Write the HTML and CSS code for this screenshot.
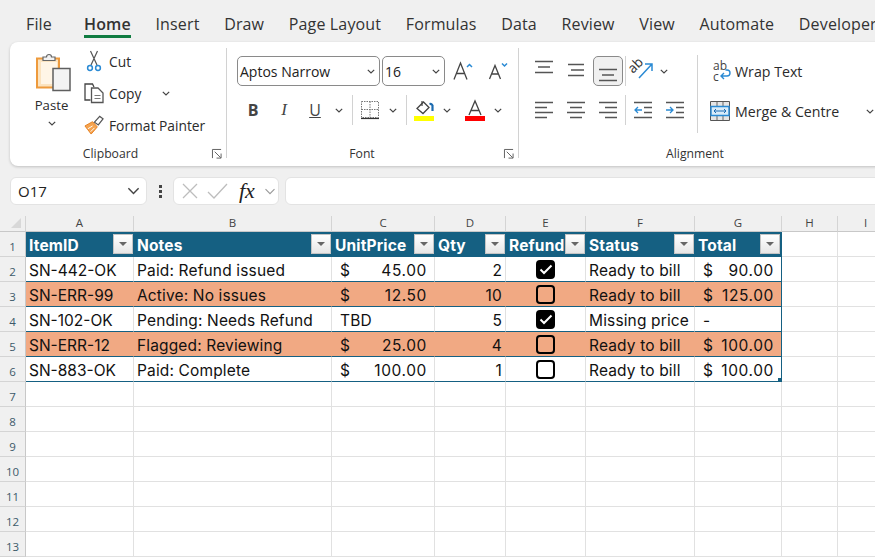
FILE: index.html
```html
<!DOCTYPE html>
<html lang="en">
<head>
<meta charset="utf-8">
<title>Excel</title>
<link rel="stylesheet" href="styles.css">
</head>
<body>
<nav class="tabs">
  <span class="tab">File</span>
  <span class="tab active">Home</span>
  <span class="tab">Insert</span>
  <span class="tab">Draw</span>
  <span class="tab">Page Layout</span>
  <span class="tab">Formulas</span>
  <span class="tab">Data</span>
  <span class="tab">Review</span>
  <span class="tab">View</span>
  <span class="tab">Automate</span>
  <span class="tab">Developer</span>
</nav>

<section class="ribbon">
  <div class="group clipboard">
    <div class="group-body clip-body">
      <div class="paste">
        <svg class="paste-icon" width="36" height="40" viewBox="0 0 36 40">
          <path d="M2 6.500h22v29H2z" fill="#fbe3bf" stroke="#ee9a3c" stroke-width="2"/>
          <path d="M6 10h16v22H6z" fill="#fff5e6"/>
          <path d="M8 8V5h3.500a2.500 2.500 0 0 1 5 0H20v3.500H8z" fill="#f2f2f2" stroke="#666" stroke-width="1.200"/>
          <path d="M18 16.500h17v22H18z" fill="#f3f3f3" stroke="#5f5f5f" stroke-width="1.500"/>
        </svg>
        <span class="paste-label">Paste</span>
        <svg class="chev paste-chev" viewBox="0 0 8 5"><path d="M.8.8 4 4 7.200.8"/></svg>
      </div>
      <div class="clip-list">
        <div class="clip-row">
          <svg width="20" height="22" viewBox="0 0 20 22"><path d="M6.500 1l6.500 14M13.500 1 7 15" fill="none" stroke="#555" stroke-width="1.200"/><circle cx="6" cy="18" r="2.400" fill="none" stroke="#2a8ad4" stroke-width="1.500"/><circle cx="14" cy="18" r="2.400" fill="none" stroke="#2a8ad4" stroke-width="1.500"/></svg>
          <span>Cut</span>
        </div>
        <div class="clip-row">
          <svg width="20" height="20" viewBox="0 0 20 20"><path d="M6.500 17H1V1h7.500l1.500 3" fill="none" stroke="#444" stroke-width="1.300"/><path d="M7.500 5h6.500l5 5v9.500H7.500z" fill="#fff" stroke="#555" stroke-width="1.300"/><path d="M10.500 12.500h6M10.500 15.500h6" stroke="#777"/></svg>
          <span>Copy</span>
          <svg class="chev copy-chev" viewBox="0 0 8 5"><path d="M.8.8 4 4 7.200.8"/></svg>
        </div>
        <div class="clip-row">
          <svg width="21" height="20" viewBox="0 0 21 20"><path d="M1 11 9 6.500l5 5.500-6.500 7.500z" fill="#f5a34f" stroke="#e57e1f"/><path d="M4 14l5-3M7 17l4-4" stroke="#fff"/><path d="M11 7l5.500-6 3.500 2.500-5 6.500z" fill="#fff" stroke="#555" stroke-width="1.300"/></svg>
          <span>Format Painter</span>
        </div>
      </div>
    </div>
    <div class="group-label">Clipboard</div>
    <svg class="launcher" viewBox="0 0 11 11"><path d="M.5 10V.5H10M3 3l6.500 6.500M5 10h5V5"/></svg>
  </div>

  <div class="group font">
    <div class="font-top">
      <div class="select font-name"><span>Aptos Narrow</span><svg class="chev" viewBox="0 0 8 5"><path d="M.8.8 4 4 7.200.8"/></svg></div>
      <div class="select font-size"><span>16</span><svg class="chev" viewBox="0 0 8 5"><path d="M.8.8 4 4 7.200.8"/></svg></div>
      <svg class="grow" width="20" height="20" viewBox="0 0 20 20"><path d="M1 18.500 7.500 2 14 18.500M3.500 12.500h8" fill="none" stroke="#444" stroke-width="1.300"/><path d="M14 6l2.500-2.500L19 6" fill="none" stroke="#2a8ad4" stroke-width="1.500"/></svg>
      <svg class="shrink" width="20" height="20" viewBox="0 0 20 20"><path d="M1.500 18 7 4.500 12.500 18M3.500 13h7" fill="none" stroke="#444" stroke-width="1.300"/><path d="M14 2.500l2.500 2.500L19 2.500" fill="none" stroke="#2a8ad4" stroke-width="1.500"/></svg>
    </div>
    <div class="font-bottom">
      <span class="fmt bold">B</span>
      <span class="fmt italic">I</span>
      <span class="fmt under">U</span>
      <svg class="chev after-u" viewBox="0 0 8 5"><path d="M.8.8 4 4 7.200.8"/></svg>
      <i class="vsep"></i>
      <svg width="20" height="20" viewBox="0 0 20 20"><path d="M1.500 1.500h17v16h-17zM10 1.500v16M1.500 9.500h17" fill="none" stroke="#777" stroke-dasharray="1.500 1"/><path d="M1 18.500h18" stroke="#333" stroke-width="1.200"/></svg>
      <svg class="chev" viewBox="0 0 8 5"><path d="M.8.8 4 4 7.200.8"/></svg>
      <i class="vsep"></i>
      <div class="colour-btn fill-btn">
        <svg width="20" height="16" viewBox="0 0 20 16"><path d="M3 8.500 9.500 2l5.500 5.500-6 6z" fill="#fff" stroke="#444" stroke-width="1.300"/><path d="M8 1v5" stroke="#444" stroke-width="1.200"/><path d="M15.500 4a2.500 2 0 0 1 3 2.500V11" fill="none" stroke="#1c6bb0" stroke-width="2.200"/></svg>
        <b class="swatch yellow"></b>
      </div>
      <svg class="chev" viewBox="0 0 8 5"><path d="M.8.8 4 4 7.200.8"/></svg>
      <div class="colour-btn text-btn">
        <svg width="20" height="16" viewBox="0 0 20 16"><path d="M4 15 10 1l6 14M6 10.500h8" fill="none" stroke="#444" stroke-width="1.300"/></svg>
        <b class="swatch red"></b>
      </div>
      <svg class="chev" viewBox="0 0 8 5"><path d="M.8.8 4 4 7.200.8"/></svg>
    </div>
    <div class="group-label">Font</div>
    <svg class="launcher" viewBox="0 0 11 11"><path d="M.5 10V.5H10M3 3l6.500 6.500M5 10h5V5"/></svg>
  </div>

  <div class="group alignment">
    <div class="align-main">
      <div class="align-grid">
        <div class="align-row">
          <span class="al al-top"><svg width="20" height="14" viewBox="0 0 20 14"><path d="M1 1.500h18M4 7h12M1 12.500h18"/></svg></span>
          <span class="al al-mid"><svg width="20" height="14" viewBox="0 0 20 14"><path d="M2 1.500h16M5 7h13M2 12.500h16"/></svg></span>
          <span class="al al-bot pressed"><svg width="20" height="14" viewBox="0 0 20 14"><path d="M1 1.500h18M4 7h12M1 12.500h18"/></svg></span>
          <i class="vsep"></i>
          <span class="orient"><svg width="22" height="24" viewBox="0 0 22 24"><path d="M6 19 19 5M12 5h7v7" fill="none" stroke="#2a8ad4" stroke-width="1.500"/><text x="0" y="15" class="orient-text" transform="rotate(-45 0 15)">ab</text></svg></span>
          <svg class="chev" viewBox="0 0 8 5"><path d="M.8.8 4 4 7.200.8"/></svg>
        </div>
        <div class="align-row">
          <span class="al"><svg width="20" height="18" viewBox="0 0 20 18"><path d="M1 1.500h18M1 6.500h12M1 11.500h18M1 16.500h12"/></svg></span>
          <span class="al"><svg width="20" height="18" viewBox="0 0 20 18"><path d="M1 1.500h18M4 6.500h12M1 11.500h18M4 16.500h12"/></svg></span>
          <span class="al"><svg width="20" height="18" viewBox="0 0 20 18"><path d="M1 1.500h18M7 6.500h12M1 11.500h18M7 16.500h12"/></svg></span>
          <i class="vsep"></i>
          <span class="al indent"><svg width="20" height="18" viewBox="0 0 20 18"><path d="M1 1.500h18M11 6.500h8M11 11.500h8M1 16.500h18"/><path class="blue" d="M9 9H2M5 6 2 9l3 3"/></svg></span>
          <span class="al indent"><svg width="20" height="18" viewBox="0 0 20 18"><path d="M1 1.500h18M11 6.500h8M11 11.500h8M1 16.500h18"/><path class="blue" d="M1 9h7M5 6l3 3-3 3"/></svg></span>
        </div>
      </div>
      <i class="vsep tall"></i>
      <div class="wrap-col">
        <div class="wrap-row wrap">
          <svg width="18" height="20" viewBox="0 0 18 20"><text x="0" y="9" class="abc">ab</text><text x="0" y="19.500" class="abc">c</text><path d="M8 15h6a3 3 0 0 0 0-6h-1.500M11 12l-3 3 3 3" fill="none" stroke="#2a8ad4" stroke-width="1.400"/></svg>
          <span>Wrap Text</span>
        </div>
        <div class="wrap-row merge">
          <svg width="20" height="20" viewBox="0 0 20 20"><path d="M.5.500h19v19H.5z" fill="#fff" stroke="#555"/><path d="M1 1h18v5H1zM1 14h18v5H1z" fill="#e6e6e6"/><path d="M7 1v5M13 1v5M7 14v5M13 14v5" stroke="#666"/><path d="M1 5.500h18v9H1z" fill="#d9ecfa" stroke="#2a8ad4" stroke-width="1.400"/><path d="M4 10h12M6 8l-2 2 2 2M14 8l2 2-2 2" fill="none" stroke="#1c6bb0"/></svg>
          <span>Merge &amp; Centre</span>
          <svg class="chev merge-chev" viewBox="0 0 8 5"><path d="M.8.8 4 4 7.200.8"/></svg>
        </div>
      </div>
    </div>
    <div class="group-label">Alignment</div>
  </div>
</section>

<section class="formula-bar">
  <div class="name-box"><span>O17</span><svg class="chev big" viewBox="0 0 8 5"><path d="M.8.8 4 4 7.200.8"/></svg></div>
  <div class="dots"><i></i><i></i><i></i></div>
  <div class="fx-box">
    <svg width="18" height="18" viewBox="0 0 18 18"><path d="M2 2l14 14M16 2 2 16" stroke="#bdbdbd" stroke-width="1.300"/></svg>
    <svg width="21" height="18" viewBox="0 0 21 18"><path d="M1 10l6 6L20 2" fill="none" stroke="#bdbdbd" stroke-width="1.300"/></svg>
    <span class="fx">fx</span>
    <svg class="chev fx-chev" viewBox="0 0 8 5"><path d="M.8.8 4 4 7.200.8"/></svg>
  </div>
  <div class="formula-input"></div>
</section>

<section class="sheet">
  <div class="col-head corner"><b class="tri"></b></div>
  <div class="col-head">A</div><div class="col-head">B</div><div class="col-head">C</div><div class="col-head">D</div><div class="col-head">E</div><div class="col-head">F</div><div class="col-head">G</div><div class="col-head">H</div><div class="col-head">I</div>

  <div class="row-head">1</div>
  <div class="th">ItemID<b class="filter"></b></div>
  <div class="th">Notes<b class="filter"></b></div>
  <div class="th">UnitPrice<b class="filter"></b></div>
  <div class="th">Qty<b class="filter"></b></div>
  <div class="th">Refund<b class="filter"></b></div>
  <div class="th">Status<b class="filter"></b></div>
  <div class="th last">Total<b class="filter"></b></div>
  <div class="c"></div><div class="c"></div>

  <div class="row-head">2</div>
  <div class="td id">SN-442-OK</div><div class="td">Paid: Refund issued</div>
  <div class="td acc"><span>$</span><span>45.00</span></div><div class="td num">2</div>
  <div class="td chk"><b class="box on"><svg viewBox="0 0 14 11"><path d="M1.500 5.500 5 9l7.500-7.500"/></svg></b></div>
  <div class="td">Ready to bill</div><div class="td acc tot last"><span>$</span><span>90.00</span></div>
  <div class="c"></div><div class="c"></div>

  <div class="row-head">3</div>
  <div class="td hl id">SN-ERR-99</div><div class="td hl">Active: No issues</div>
  <div class="td hl acc"><span>$</span><span>12.50</span></div><div class="td hl num">10</div>
  <div class="td hl chk"><b class="box"></b></div>
  <div class="td hl">Ready to bill</div><div class="td hl acc tot last"><span>$</span><span>125.00</span></div>
  <div class="c"></div><div class="c"></div>

  <div class="row-head">4</div>
  <div class="td id">SN-102-OK</div><div class="td">Pending: Needs Refund</div>
  <div class="td tbd">TBD</div><div class="td num">5</div>
  <div class="td chk"><b class="box on"><svg viewBox="0 0 14 11"><path d="M1.500 5.500 5 9l7.500-7.500"/></svg></b></div>
  <div class="td">Missing price</div><div class="td tot last">-</div>
  <div class="c"></div><div class="c"></div>

  <div class="row-head">5</div>
  <div class="td hl id">SN-ERR-12</div><div class="td hl">Flagged: Reviewing</div>
  <div class="td hl acc"><span>$</span><span>25.00</span></div><div class="td hl num">4</div>
  <div class="td hl chk"><b class="box"></b></div>
  <div class="td hl">Ready to bill</div><div class="td hl acc tot last"><span>$</span><span>100.00</span></div>
  <div class="c"></div><div class="c"></div>

  <div class="row-head">6</div>
  <div class="td id">SN-883-OK</div><div class="td">Paid: Complete</div>
  <div class="td acc"><span>$</span><span>100.00</span></div><div class="td num">1</div>
  <div class="td chk"><b class="box"></b></div>
  <div class="td">Ready to bill</div><div class="td acc tot last"><span>$</span><span>100.00</span><b class="resize"></b></div>
  <div class="c"></div><div class="c"></div>

  <div class="row-head">7</div><div class="c"></div><div class="c"></div><div class="c"></div><div class="c"></div><div class="c"></div><div class="c"></div><div class="c"></div><div class="c"></div><div class="c"></div>
  <div class="row-head">8</div><div class="c"></div><div class="c"></div><div class="c"></div><div class="c"></div><div class="c"></div><div class="c"></div><div class="c"></div><div class="c"></div><div class="c"></div>
  <div class="row-head">9</div><div class="c"></div><div class="c"></div><div class="c"></div><div class="c"></div><div class="c"></div><div class="c"></div><div class="c"></div><div class="c"></div><div class="c"></div>
  <div class="row-head">10</div><div class="c"></div><div class="c"></div><div class="c"></div><div class="c"></div><div class="c"></div><div class="c"></div><div class="c"></div><div class="c"></div><div class="c"></div>
  <div class="row-head">11</div><div class="c"></div><div class="c"></div><div class="c"></div><div class="c"></div><div class="c"></div><div class="c"></div><div class="c"></div><div class="c"></div><div class="c"></div>
  <div class="row-head">12</div><div class="c"></div><div class="c"></div><div class="c"></div><div class="c"></div><div class="c"></div><div class="c"></div><div class="c"></div><div class="c"></div><div class="c"></div>
  <div class="row-head">13</div><div class="c"></div><div class="c"></div><div class="c"></div><div class="c"></div><div class="c"></div><div class="c"></div><div class="c"></div><div class="c"></div><div class="c"></div>
</section>
</body>
</html>
```
FILE: styles.css
```css
* { box-sizing: border-box; }
html, body { margin: 0; height: 560px; width: 875px; overflow: hidden; }
body { background: #f0f0f0; font-family: "Open Sans", "Noto Sans", sans-serif; color: #2b2b2b; }
svg { overflow: visible; }

/* tabs */
.tabs { display: flex; gap: 24.6px; height: 42px; padding: 13px 0 0 26px; font-size: 16px; letter-spacing: .15px; white-space: nowrap; color: #333; }
.tab { height: 25px; line-height: 22px; flex: none; }
.tab.active { font-weight: 600; border-bottom: 3px solid #107c41; margin-left: 7.500px; }

/* ribbon */
.ribbon { display: flex; margin-left: 10px; width: 900px; height: 124px; background: #fff; border-radius: 8px 0 0 8px; box-shadow: 0 1px 3px rgba(0,0,0,.2); font-size: 13.800px; }
.group { position: relative; display: flex; flex-direction: column; height: 124px; }
.group::after { content: ""; position: absolute; right: 0; top: 6px; height: 110px; width: 1px; background: #d2d2d2; }
.alignment::after { display: none; }
.group-label { position: absolute; left: 0; right: 0; top: 103px; text-align: center; font-size: 12.200px; line-height: 17px; color: #333; }
.clipboard .group-label { right: 16px; }
.font .group-label { right: 22px; }
.launcher { position: absolute; right: 5px; top: 107px; width: 10px; height: 10px; fill: none; stroke: #555; }
.chev { width: 8px; height: 5px; flex: none; fill: none; stroke: #444; stroke-width: 1.200; }
.vsep { width: 1px; height: 30px; background: #d2d2d2; flex: none; }

.clipboard { width: 217px; }
.clip-body { display: flex; padding: 9px 0 0 20px; }
.paste { width: 43px; display: flex; flex-direction: column; align-items: center; }
.paste-icon { margin-top: 1px; margin-left: 2px; flex: none; }
.paste-label { font-size: 13.200px; line-height: 20px; margin-top: 3px; }
.paste-chev { margin-top: 6px; }
.clip-list { margin: -6px 0 0 11px; display: flex; flex-direction: column; }
.clip-row { display: flex; align-items: center; height: 32px; gap: 5px; }
.clip-row svg:first-child { width: 20px; flex: none; }
.copy-chev { margin-left: 16px; }

.font { width: 292px; }
.font-top { display: flex; align-items: center; padding: 14px 0 0 10px; gap: 2px; }
.select { height: 30px; border: 1px solid #8a8a8a; border-radius: 5px; display: flex; align-items: center; justify-content: space-between; padding: 0 4px 0 2px; font-size: 14px; color: #222; }
.font-name { width: 143px; }
.font-size { width: 63px; }
.grow { margin-left: 6px; }
.shrink { margin-left: 13px; }
.font-bottom { display: flex; align-items: center; height: 30px; margin-top: 9px; padding-left: 20px; }
.fmt { width: 12px; text-align: center; font-size: 16px; color: #444; flex: none; }
.bold { font-weight: 700; }
.italic { font-style: italic; margin-left: 19px; font-family: "Liberation Serif", serif; font-size: 17px; }
.under { text-decoration: underline; margin-left: 19px; }
.font-bottom > .chev { margin: 0 0 0 9px; }
.font-bottom > .after-u { margin-left: 14px; }
.font-bottom > .vsep { margin: 0 7px 0 9px; }
.font-bottom > svg:not(.chev) { flex: none; }
.colour-btn { width: 20px; display: flex; flex-direction: column; flex: none; }
.swatch { height: 5px; display: block; }
.yellow { background: #ffff00; }
.red { background: #ff0000; }
.text-btn { margin-left: 14px; }

.alignment { flex: 1; }
.alignment .group-label { left: 0; width: 352px; right: auto; }
.align-main { display: flex; }
.align-grid { padding: 14px 0 0 10px; width: 178px; }
.align-row { display: flex; align-items: center; height: 30px; margin-bottom: 9px; }
.al { width: 30px; height: 30px; margin-right: 2px; display: flex; align-items: center; justify-content: center; flex: none; border-radius: 5px; }
.al svg { fill: none; stroke: #555; stroke-width: 1.300; }
.al .blue { stroke: #2a8ad4; }
.al-top svg { margin-top: -9px; }
.al-mid svg { margin-top: -3px; }
.al-bot svg { margin-top: 8px; }
.pressed { background: #f0f0f0; border: 1px solid #8a8a8a; }
.vsep + .indent { margin-left: 2px; }
.orient { width: 22px; height: 24px; flex: none; margin: 0 5px 0 7px; }
.orient-text { font-size: 13.500px; fill: #333; }
.tall { height: 78px; margin-top: 13px; }
.wrap-col { padding: 14px 0 0 12px; width: 180px; }
.wrap-row { display: flex; align-items: center; height: 30px; gap: 5px; white-space: nowrap; font-size: 14.200px; }
.wrap-row svg:first-child { flex: none; }
.wrap { padding-left: 3px; gap: 4px; }
.merge { margin-top: 10px; }
.merge-chev { margin-left: 22px; }
.abc { font-size: 12px; fill: #444; }

/* formula bar */
.formula-bar { display: flex; align-items: stretch; height: 28px; margin: 11px 0 0 10px; width: 900px; }
.name-box { width: 137px; background: #fff; border: 1px solid #e3e3e3; border-radius: 6px; display: flex; align-items: center; justify-content: space-between; padding: 0 6px 0 7px; font-size: 15px; color: #222; }
.chev.big { width: 13px; height: 8px; stroke-width: .9; }
.dots { width: 26px; display: flex; flex-direction: column; align-items: center; justify-content: center; gap: 2px; }
.dots i { width: 3px; height: 3px; background: #444; display: block; }
.fx-box { width: 106px; background: #fff; border: 1px solid #e3e3e3; border-radius: 6px; display: flex; align-items: center; padding-left: 7px; gap: 8px; }
.fx { font-family: "Liberation Serif", serif; font-style: italic; font-size: 22px; line-height: 24px; color: #222; margin-left: 3px; width: 21px; }
.fx-chev { margin-left: -4px; width: 12px; height: 7px; stroke: #999; stroke-width: .8; }
.formula-input { margin-left: 6px; flex: 1; background: #fff; border: 1px solid #e3e3e3; border-radius: 6px; }

/* sheet */
.sheet { margin-top: 11px; display: grid; grid-template-columns: 26px 108px 198px 103px 71px 80px 109px 87px 56px 56px; grid-template-rows: 16px 25px repeat(13, 25px); background: #fff; font-family: Inter, "Noto Sans", sans-serif; }
.col-head { background: #f0f0f0; text-align: center; font-family: "Open Sans", sans-serif; font-size: 11.500px; line-height: 13px; color: #444; border-right: 1px solid #d4d4d4; border-bottom: 1px solid #c8c8c8; }
.corner { position: relative; }
.tri { position: absolute; right: 4px; bottom: 3px; width: 0; height: 0; border-left: 10px solid transparent; border-bottom: 10px solid #d8d8d8; }
.row-head { background: #f0f0f0; text-align: center; font-family: "Open Sans", sans-serif; font-size: 11.500px; line-height: 29px; color: #3d5a6a; border-right: 1px solid #c8c8c8; border-bottom: 1px solid #d4d4d4; }
.c { border-right: 1px solid #e1e1e1; border-bottom: 1px solid #e1e1e1; background: #fff; }
.th { position: relative; background: #156082; color: #fff; font-weight: 700; font-size: 15.500px; letter-spacing: .15px; line-height: 27px; padding-left: 3px; border-bottom: 1px solid #156082; white-space: nowrap; overflow: hidden; }
.filter { position: absolute; right: 1px; top: 2px; width: 20px; height: 20px; background: linear-gradient(#fff, #e6e6e6); border: 1px solid #c4c4c4; }
.filter::after { content: ""; position: absolute; left: 5px; top: 7px; border-left: 4px solid transparent; border-right: 4px solid transparent; border-top: 4px solid #666; }
.td { position: relative; font-size: 15.500px; letter-spacing: .15px; line-height: 27px; padding: 0 3px; color: #111; background: #fff; border-right: 1px solid #e1e1e1; border-bottom: 1px solid #156082; white-space: nowrap; }
.td.id { letter-spacing: 0; }
.td.hl { background: #f1a983; border-right-color: #f1a983; }
.last { border-right: 1px solid #156082 !important; }
.num { text-align: right; }
.acc { display: flex; justify-content: space-between; padding: 0 7px 0 8px; letter-spacing: .6px; }
.tbd { padding-left: 8px; }
.tot { padding-left: 8px; }
.chk { display: flex; align-items: center; justify-content: center; padding: 0; }
.box { width: 19px; height: 19px; border: 2px solid #000; border-radius: 4px; display: flex; align-items: center; justify-content: center; }
.box.on { background: #000; }
.box svg { width: 14px; height: 11px; fill: none; stroke: #fff; stroke-width: 2; }
.resize { position: absolute; right: 0; bottom: 0; width: 3px; height: 3px; background: #156082; }
```
